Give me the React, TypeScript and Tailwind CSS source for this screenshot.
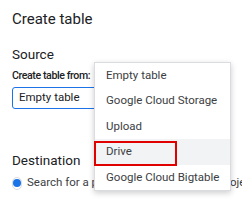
export default function App() {
  const items = ["Empty table", "Google Cloud Storage", "Upload", "Drive", "Google Cloud Bigtable"];
  return (
    <div className="relative w-[242px] h-[200px] overflow-hidden bg-white" style={{ fontFamily: "Roboto, 'Liberation Sans', sans-serif" }}>
      <div className="flex flex-col pl-3 pt-[9px]">
        <div className="text-[15px] leading-[20px] text-[#202124]">Create table</div>
        <div className="mt-[16px] text-[13.5px] leading-[18px] text-[#202124]">Source</div>
        <div className="mt-[6px] text-[10.6px] leading-[14px] font-medium tracking-[-0.4px] text-[#202124] whitespace-nowrap">Create table from:</div>
        <div className="mt-[4px] w-[200px] h-[22px] rounded-[3px] border border-[#1a73e8] flex items-center pl-[6px] text-[11.5px] text-[#202124]">Empty table</div>
        <div className="mt-[42px] text-[13.5px] leading-[18px] text-[#202124]">Destination</div>
        <div className="mt-[7px] h-[14px] flex items-center text-[11.5px] text-[#3c4043] whitespace-nowrap">
          <span className="w-[13px] h-[13px] rounded-full border border-[#dadce0] flex items-center justify-center">
            <span className="w-[8px] h-[8px] rounded-full bg-[#1a73e8]" />
          </span>
          <span className="ml-[5px]">Search for a project</span>
          <span className="ml-[45px] w-[13px] h-[13px] rounded-full border-2 border-[#5f6368]" />
          <span className="ml-[5px]">Enter a project name</span>
        </div>
      </div>
      <div className="absolute left-[94px] top-[62px] w-[137px] bg-white border border-[#dadce0] shadow-[0_2px_6px_rgba(0,0,0,0.2)] flex flex-col">
        {items.map((t) => (
          <div key={t} className={`h-[25.4px] flex items-center pl-[11px] text-[11.5px] text-[#3c4043] whitespace-nowrap ${t === "Drive" ? "bg-[#f1f3f4]" : ""}`}>{t}</div>
        ))}
      </div>
      <div className="absolute left-[94px] top-[141px] w-[83px] h-[25px] border-2 border-[#e00000]" />
    </div>
  );
}
